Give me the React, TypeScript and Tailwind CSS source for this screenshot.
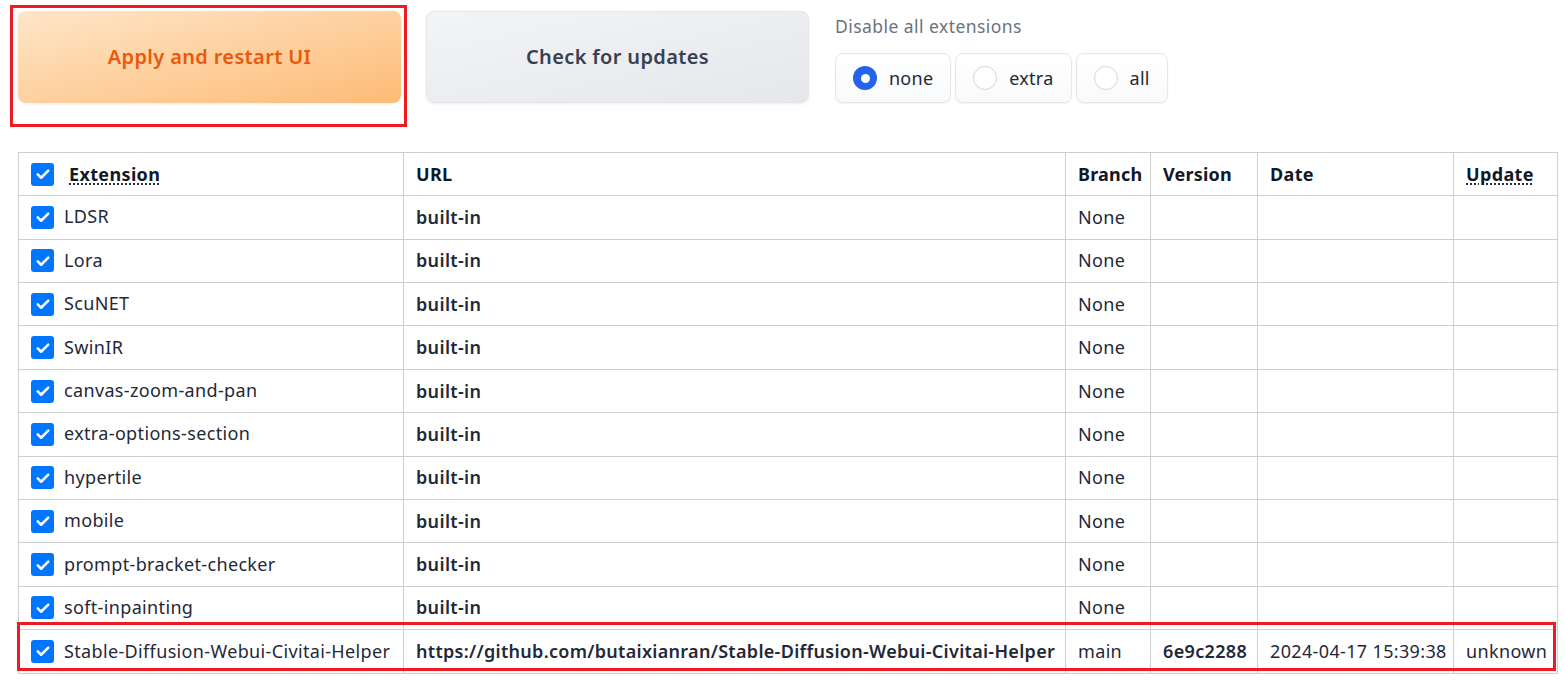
import React from "react";

const rows = [
  "LDSR",
  "Lora",
  "ScuNET",
  "SwinIR",
  "canvas-zoom-and-pan",
  "extra-options-section",
  "hypertile",
  "mobile",
  "prompt-bracket-checker",
  "soft-inpainting",
];

function Check() {
  return (
    <span className="inline-flex h-[23px] w-[23px] shrink-0 items-center justify-center rounded-[3px] bg-[#0075ff]">
      <svg viewBox="0 0 24 24" className="h-[18px] w-[18px]" fill="none">
        <path d="M5 12.5l4.5 4.5L19 7.5" stroke="white" strokeWidth="3.4" strokeLinecap="round" strokeLinejoin="round" />
      </svg>
    </span>
  );
}

function Radio({ label, checked }: { label: string; checked?: boolean }) {
  return (
    <div className="flex h-[50px] items-center gap-[12px] rounded-[8px] border border-[#e5e7eb] bg-gradient-to-b from-white to-[#f9fafb] pl-[17px] pr-[17px] shadow-[0_1px_2px_rgba(0,0,0,0.06)]">
      {checked ? (
        <span className="flex h-[24px] w-[24px] items-center justify-center rounded-full bg-[#2563eb]">
          <span className="h-[9px] w-[9px] rounded-full bg-white" />
        </span>
      ) : (
        <span className="h-[24px] w-[24px] rounded-full border border-[#d1d5db] bg-white" />
      )}
      <span className="text-[18px] tracking-[0.25px] text-[#1f2937]">{label}</span>
    </div>
  );
}

export default function App() {
  const cell = "border border-[#cfcfcf] px-[12px] align-middle";
  return (
    <div className="relative min-h-[680px] bg-white pl-[18px] pt-[11px] tracking-[0.35px] text-[#1f2937] [font-family:'Noto_Sans',Lato,sans-serif]">
      {/* Top controls */}
      <div className="flex items-start">
        <button className="flex h-[92px] w-[383px] items-center justify-center rounded-[8px] bg-gradient-to-br from-[#fee6c8] to-[#fdbb75] text-[20px] font-semibold text-[#ea580c] shadow-[0_1px_3px_rgba(0,0,0,0.08)]">
          Apply and restart UI
        </button>
        <button className="ml-[25px] flex h-[92px] w-[383px] items-center justify-center rounded-[8px] border border-[#e5e7eb] bg-gradient-to-br from-[#f3f4f6] to-[#e5e7eb] text-[20px] font-semibold text-[#374151] shadow-[0_1px_3px_rgba(0,0,0,0.08)]">
          Check for updates
        </button>
        <div className="ml-[26px] flex flex-col">
          <span className="mt-[2px] text-[17.5px] tracking-[0.45px] text-[#6b7280]">Disable all extensions</span>
          <div className="mt-[14px] flex gap-[4px]">
            <Radio label="none" checked />
            <Radio label="extra" />
            <Radio label="all" />
          </div>
        </div>
      </div>

      {/* Table */}
      <table className="mt-[49px] w-[1539px] table-fixed border-collapse text-[18px]">
        <colgroup>
          <col className="w-[385px]" />
          <col className="w-[662px]" />
          <col className="w-[85px]" />
          <col className="w-[107px]" />
          <col className="w-[196px]" />
          <col className="w-[104px]" />
        </colgroup>
        <thead>
          <tr className="h-[43px] text-left font-semibold text-[#111827]">
            <th className={cell}>
              <div className="flex items-center gap-[15px]">
                <Check />
                <span className="underline decoration-dotted underline-offset-[3px]">Extension</span>
              </div>
            </th>
            <th className={cell}>URL</th>
            <th className={`${cell} px-[9px] tracking-[0.2px]`}>Branch</th>
            <th className={`${cell} px-[10px] tracking-[0.2px]`}>Version</th>
            <th className={cell}>Date</th>
            <th className={`${cell} px-[11px]`}>
              <span className="underline decoration-dotted underline-offset-[3px]">Update</span>
            </th>
          </tr>
        </thead>
        <tbody>
          {rows.map((name) => (
            <tr key={name} className="h-[43.4px]">
              <td className={cell}>
                <div className="flex items-center gap-[10px]">
                  <Check />
                  <span className="-mt-[1px]">{name}</span>
                </div>
              </td>
              <td className={`${cell} font-semibold`}>built-in</td>
              <td className={`${cell} px-[10px]`}>None</td>
              <td className={cell}></td>
              <td className={cell}></td>
              <td className={cell}></td>
            </tr>
          ))}
          <tr className="h-[43.4px]">
            <td className={cell}>
              <div className="flex items-center gap-[10px]">
                <Check />
                <span className="whitespace-nowrap">Stable-Diffusion-Webui-Civitai-Helper</span>
              </div>
            </td>
            <td className={`${cell} whitespace-nowrap font-semibold tracking-[0.3px]`}>
              https://github.com/butaixianran/Stable-Diffusion-Webui-Civitai-Helper
            </td>
            <td className={`${cell} px-[10px]`}>main</td>
            <td className={`${cell} px-[10px] font-semibold`}>6e9c2288</td>
            <td className={`${cell} px-[10px] whitespace-nowrap`}>2024-04-17 15:39:38</td>
            <td className={`${cell} px-[11px]`}>unknown</td>
          </tr>
        </tbody>
      </table>

      {/* Highlight boxes */}
      <div className="pointer-events-none absolute left-[10px] top-[5px] h-[122px] w-[397px] border-[3px] border-[#ed1c24]" />
      <div className="pointer-events-none absolute left-[17px] top-[622px] h-[49px] w-[1539px] border-[3px] border-[#ed1c24]" />
    </div>
  );
}
